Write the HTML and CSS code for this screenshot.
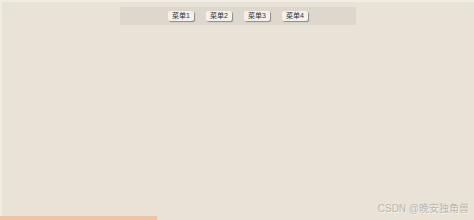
FILE: index.html
```html
<!DOCTYPE html>
<html>
<head>
<meta charset="utf-8">
<link rel="stylesheet" href="styles.css">
</head>
<body>
<div class="page">
  <div class="main">
    <nav class="menu">
      <span class="btn">菜单1</span>
      <span class="btn">菜单2</span>
      <span class="btn">菜单3</span>
      <span class="btn">菜单4</span>
    </nav>
  </div>
  <div class="progress"></div>
  <div class="mark">CSDN @晚安独角兽</div>
</div>
</body>
</html>
```
FILE: styles.css
```css
html, body { margin: 0; padding: 0; }
body { background: #e9e2d7; font-family: "Liberation Sans", "Noto Sans CJK SC", sans-serif; }
.page {
  position: relative;
  width: 474px; height: 220px;
  box-sizing: border-box;
  border-top: 2px solid #f1ece5;
  border-left: 2px solid #f0ebe4;
  display: flex; flex-direction: column;
}
.main { flex: 1; }
.menu {
  margin: 5px 0 0 118px;
  width: 236px; height: 18px;
  background: #ddd7ce;
  display: flex; align-items: center; justify-content: center;
  gap: 12px;
}
.btn {
  width: 26px; height: 10px;
  background: #f3f1ed;
  border-radius: 2px;
  box-shadow: 1px 1px 1px #8e8a84;
  font-size: 7px; line-height: 10px;
  text-align: center; color: #333;
}
.progress {
  width: 157px; height: 4px;
  margin-left: -2px;
  background: #f0c4a0;
}
.mark {
  position: absolute; right: 5px; bottom: 5px;
  font-size: 10px; color: #bcb6ae;
  text-shadow: 1px 1px 0 #f6f2ec;
}
```
